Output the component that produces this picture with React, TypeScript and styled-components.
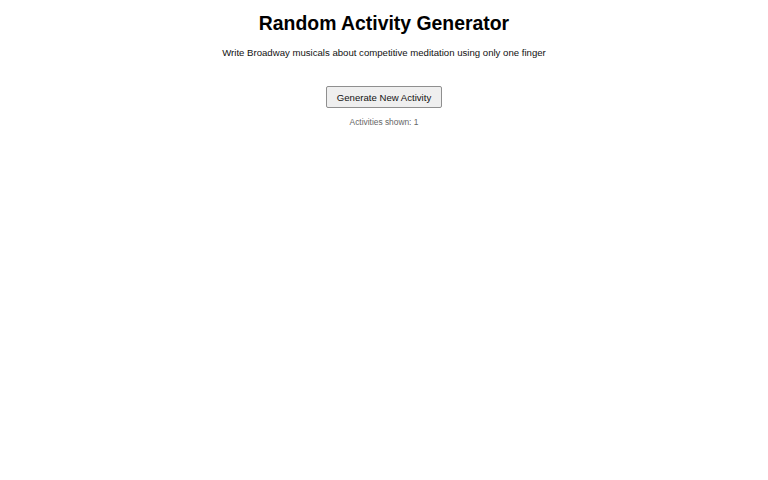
import React, { useState } from 'react';
import styled, { createGlobalStyle } from 'styled-components';

const activities = [
  'Write Broadway musicals about competitive meditation using only one finger',
  'Teach a houseplant to appreciate modern jazz',
  'Organize your sock drawer by emotional significance',
];

const GlobalStyle = createGlobalStyle`
  body {
    margin: 0;
    background: #fff;
    font-family: "Liberation Sans", Arial, sans-serif;
  }
`;

const Page = styled.main`
  display: flex;
  flex-direction: column;
  align-items: center;
  padding-top: 12px;
`;

const Title = styled.h1`
  margin: 0;
  font-size: 19.4px;
  font-weight: bold;
  color: #000;
`;

const Activity = styled.p`
  margin: 12px 0 0;
  font-size: 9.6px;
  color: #111;
`;

const Button = styled.button`
  margin-top: 28px;
  height: 22px;
  padding: 0 10px;
  font-family: inherit;
  font-size: 9.6px;
  color: #111;
  background: #efefef;
  border: 1px solid #8f8f8f;
  border-radius: 2px;
  cursor: pointer;
`;

const Counter = styled.p`
  margin: 9px 0 0;
  font-size: 8.4px;
  color: #666;
`;

export default () => {
  const [count, setCount] = useState(1);
  const activity = activities[(count - 1) % activities.length];
  return (
    <>
      <GlobalStyle />
      <Page>
        <Title>Random Activity Generator</Title>
        <Activity>{activity}</Activity>
        <Button onClick={() => setCount(count + 1)}>Generate New Activity</Button>
        <Counter>Activities shown: {count}</Counter>
      </Page>
    </>
  );
};
